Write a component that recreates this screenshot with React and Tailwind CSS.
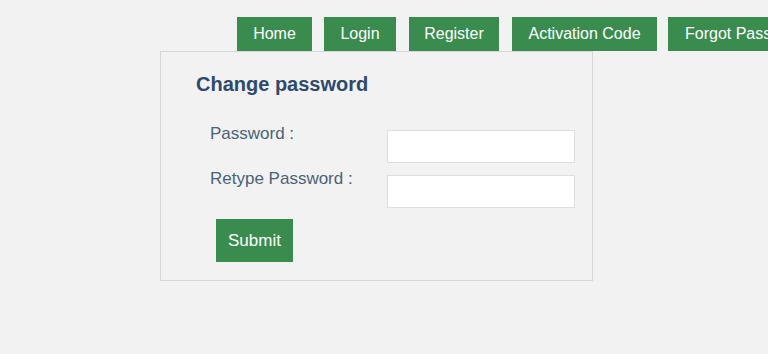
export default function App() {
  const nav = [
    { n: "Home", c: "w-[75px] justify-center" },
    { n: "Login", c: "w-[72px] ml-[12px] justify-center" },
    { n: "Register", c: "w-[90px] ml-[13px] justify-center" },
    { n: "Activation Code", c: "w-[145px] ml-[13px] justify-center" },
    { n: "Forgot Password", c: "px-[17px] ml-[11px]" },
  ];
  return (
    <div
      className="w-[768px] h-[354px] overflow-hidden bg-[#f2f2f2]"
      style={{ fontFamily: '"Liberation Sans", Arial, sans-serif' }}
    >
      <div className="flex pl-[237px] pt-[17px] whitespace-nowrap">
        {nav.map((x) => (
          <div
            key={x.n}
            className={`${x.c} shrink-0 h-[34px] flex items-center bg-[#3a8c4e] text-white text-[16px]`}
          >
            {x.n}
          </div>
        ))}
      </div>
      <div className="ml-[160px] w-[433px] h-[230px] border border-[#d6d6d6] pl-[35px] pt-[20px]">
        <h2 className="text-[20px] leading-6 font-bold text-[#2d4a6c]">Change password</h2>
        <div className="mt-[28px] pl-[14px]">
          <div className="flex h-[45px]">
            <div className="w-[177px] text-[17px] leading-5 text-[#4a6278]">Password :</div>
            <input
              type="password"
              className="mt-[6px] w-[188px] h-[33px] bg-white border border-[#dedede] outline-none"
            />
          </div>
          <div className="flex h-[45px]">
            <div className="w-[177px] text-[17px] leading-5 text-[#4a6278]">Retype Password :</div>
            <input
              type="password"
              className="mt-[6px] w-[188px] h-[33px] bg-white border border-[#dedede] outline-none"
            />
          </div>
        </div>
        <button className="mt-[5px] ml-[20px] w-[77px] h-[43px] bg-[#3a8c4e] text-white text-[17px]">
          Submit
        </button>
      </div>
    </div>
  );
}
